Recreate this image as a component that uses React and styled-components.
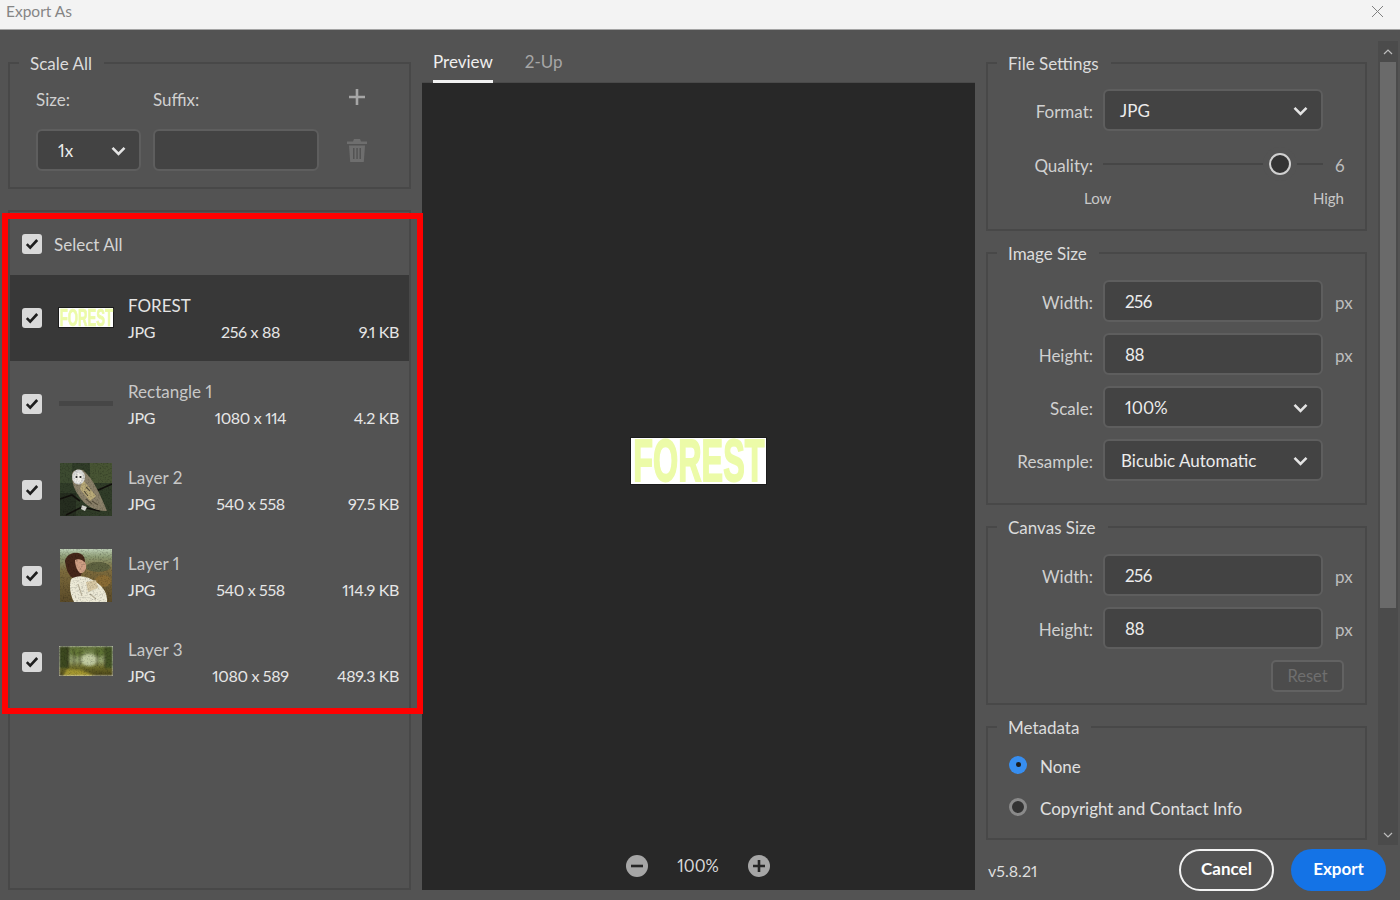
import React from 'react';
import styled, { createGlobalStyle } from 'styled-components';

const Global = createGlobalStyle`
  html, body { margin: 0; padding: 0; height: 100%; background: #535353; overflow: hidden; }
  body { font-family: Lato, "Noto Sans", sans-serif; font-size: 17px; color: #d4d4d4; font-variant-numeric: proportional-nums; font-feature-settings: "pnum" 1; }
  * { box-sizing: border-box; }
`;

const Dialog = styled.div`width: 1400px; height: 900px; display: flex; flex-direction: column; overflow: hidden;`;
const TitleBar = styled.header`
  height: 30px; flex: none; background: #f3f3f3; border-bottom: 1px solid #a4a4a4;
  display: flex; align-items: center; justify-content: space-between; padding: 0 16px 7px 6px;
  color: #858585; font-size: 15.5px;
`;
const Body = styled.main`flex: 1; display: grid; grid-template-columns: 422px 553px 425px; min-height: 0;`;

const LeftColumn = styled.section`position: relative; padding: 22px 11px 10px 8px; display: flex; flex-direction: column; gap: 21px;`;
const Group = styled.fieldset`
  margin: 0; min-width: 0; border: 2px solid #484848; padding: 0;
  height: ${p => p.$h}px; flex: none;
`;
const Legend = styled.legend`padding: 0 12px 0 11px; margin-left: 9px; line-height: 24px; height: 22px; color: #dcdcdc; font-size: 17px;`;
const ScaleGrid = styled.div`
  display: grid; grid-template-columns: 105px 166px 1fr; column-gap: 12px; grid-template-rows: 30px 42px; row-gap: 15px;
  padding: 10px 0 0 26px; align-items: center;
`;
const Label = styled.span`color: #d0d0d0;`;
const IconSlot = styled.span`display: flex; justify-content: center; width: 28px; margin-left: 12px; padding-bottom: ${p => p.$up || 0}px;`;
const Field = styled.div`
  height: 42px; background: #434343; border: 2px solid #5e5e5e; border-radius: 6px;
  display: flex; align-items: center; justify-content: space-between; color: #ececec;
  padding: 1px 13px 0 ${p => p.$pl || 18}px; font-size: 17px; letter-spacing: ${p => p.$num ? '-0.6px' : '0'};
`;
const Chevron = () => (
  <svg width="15" height="10" viewBox="0 0 15 10" fill="none" stroke="#e4e4e4" strokeWidth="2.6"><path d="M1.5 1.8 7.5 7.8 13.5 1.8" /></svg>
);

const LayerPanel = styled.div`flex: 1; border: 2px solid #484848; display: flex; flex-direction: column;`;
const SelectRow = styled.div`height: 63px; display: flex; align-items: center; padding-left: 12px; gap: 12px; flex: none;`;
const LayerRow = styled.div`
  height: 86px; flex: none; display: flex; align-items: center; padding: 0 10px 0 12px;
  background: ${p => p.$active ? '#383838' : 'transparent'};
`;
const Check = styled.span`
  width: 20px; height: 20px; flex: none; border-radius: 3px; background: #d9d9d9; display: flex; align-items: center; justify-content: center;
`;
const CheckMark = () => (
  <Check><svg width="14" height="12" viewBox="0 0 14 12" fill="none" stroke="#1e1e1e" strokeWidth="2.6"><path d="M1.8 6.2 5.2 9.6 12.2 2" /></svg></Check>
);
const SelectLabel = styled.span`color: #d4d4d4; padding-top: 2px;`;
const ThumbSlot = styled.div`width: 54px; height: 54px; flex: none; margin: 0 15px 2px 17px; display: flex; align-items: center; justify-content: center;`;
const LayerText = styled.div`flex: 1; min-width: 0; padding-top: 2px;`;
const LayerName = styled.div`height: 26px; line-height: 26px; color: ${p => p.$active ? '#e4e4e4' : '#c8c8c8'};`;
const LayerMeta = styled.div`
  height: 26px; line-height: 26px; display: grid; grid-template-columns: 60px 125px 1fr; color: #e6e6e6; font-size: 16px; letter-spacing: -0.35px;
`;
const Dim = styled.span`text-align: center;`;
const Size = styled.span`text-align: right;`;

const ForestMark = styled.div`
  width: ${p => p.$w}px; height: ${p => p.$h}px; background: #fff; display: flex; align-items: center; justify-content: center;
  outline: 1px solid #1c1c1c;
`;
const ForestWord = styled.span`
  font-family: "Liberation Sans", sans-serif; font-weight: 700; font-size: ${p => p.$fs}px; line-height: 1; color: #ecfba8;
  -webkit-text-stroke: ${p => p.$stroke}px #ecfba8; transform: scale(1.01, 1.85); white-space: nowrap;
`;
const RectThumb = styled.div`width: 54px; height: 5px; background: #464646;`;

const Grain = ({ id, blur }) => (
  <filter id={id} colorInterpolationFilters="sRGB">
    <feGaussianBlur in="SourceGraphic" stdDeviation={blur} result="b" />
    <feTurbulence type="fractalNoise" baseFrequency="0.6" numOctaves="2" seed="4" result="t" />
    <feColorMatrix in="t" type="matrix" values="0.6 0 0 0 0.68  0.6 0 0 0 0.68  0.6 0 0 0 0.68  0 0 0 0 1" result="g" />
    <feBlend in="b" in2="g" mode="multiply" />
  </filter>
);

const OwlThumb = () => (
  <svg width="52" height="53" viewBox="0 0 52 53">
    <defs><Grain id="o" blur="0.5" /></defs>
    <g filter="url(#o)">
      <rect width="52" height="53" fill="#303c28" />
      <rect x="30" width="22" height="20" fill="#475433" />
      <rect y="0" width="12" height="20" fill="#3c4a30" />
      <rect y="30" width="16" height="23" fill="#252d1f" />
      <path d="M0 36 12 32 20 38M36 28 52 21M6 52 22 44 40 48" stroke="#12100c" strokeWidth="1.6" fill="none" />
      <path d="M12 12C12 6 22 5 25 9 32 15 40 30 47 48 36 48 27 44 21 36 15 28 12 22 12 12Z" fill="#8a8069" />
      <path d="M23 17 36 33 30 38 20 26Z" fill="#b9aa78" />
      <path d="M26 24 30 28M24 28 28 33M32 38 38 42M26 36 32 41" stroke="#5a523f" strokeWidth="1.1" />
      <ellipse cx="18.5" cy="14" rx="6.5" ry="7.5" fill="#d8d8d6" />
      <ellipse cx="18.5" cy="15" rx="4.2" ry="5" fill="#efede7" />
      <circle cx="16.5" cy="14" r="1.1" fill="#222" /><circle cx="20.5" cy="14" r="1.1" fill="#222" />
      <path d="M22 42 27 44 25 48 21 46Z" fill="#d2d2cc" />
    </g>
  </svg>
);
const WomanThumb = () => (
  <svg width="52" height="53" viewBox="0 0 52 53">
    <defs>
      <Grain id="w" blur="0.6" />
      <linearGradient id="wb" x1="0" y1="0" x2="0" y2="1"><stop offset="0" stopColor="#c0d2b8" /><stop offset=".15" stopColor="#8c9a72" /><stop offset=".42" stopColor="#7c6a3c" /><stop offset="1" stopColor="#5a4a28" /></linearGradient>
    </defs>
    <g filter="url(#w)">
      <rect width="52" height="53" fill="url(#wb)" />
      <ellipse cx="38" cy="18" rx="12" ry="5" fill="#5e6240" />
      <ellipse cx="43" cy="32" rx="8" ry="6" fill="#8a6c34" />
      <path d="M5 12C7 3 20 1 24 8 27 15 23 22 20 28 14 32 7 28 5 12Z" fill="#452619" />
      <path d="M15 11C19 9 26 12 26 16 27 21 23 25 20 24 17 22 15 16 15 11Z" fill="#cf9f84" />
      <path d="M11 30C18 25 28 27 36 33 44 38 48 46 47 53H14C10 46 9 36 11 30Z" fill="#ece9d6" />
      <path d="M26 33 36 31 38 39 28 43Z" fill="#d6c7a3" />
      <path d="M18 35 22 47M30 45 36 50" stroke="#b7b09a" strokeWidth="1.2" />
    </g>
  </svg>
);
const WoodThumb = () => (
  <svg width="54" height="30" viewBox="0 0 54 30">
    <defs>
      <Grain id="f" blur="0.8" />
      <linearGradient id="fg" x1="0" y1="0" x2="0" y2="1"><stop offset="0" stopColor="#5b6c33" /><stop offset=".5" stopColor="#9aa874" /><stop offset=".72" stopColor="#6c6a28" /><stop offset="1" stopColor="#4a4318" /></linearGradient>
    </defs>
    <g filter="url(#f)">
      <rect width="54" height="30" fill="url(#fg)" />
      <ellipse cx="30" cy="14" rx="8" ry="6" fill="#c2cca2" />
      <rect x="0" y="0" width="10" height="22" fill="#3c481f" />
      <rect x="46" y="0" width="8" height="22" fill="#445525" />
      <ellipse cx="18" cy="6" rx="7" ry="4" fill="#667a38" />
      <ellipse cx="41" cy="6" rx="6" ry="4" fill="#5e7234" />
      <path d="M8 23 22 24 36 30H4Z" fill="#a39630" />
      <path d="M9 0V22M15 3V20M21 4V19M38 3V20M46 0V22" stroke="#2c2a18" strokeWidth="0.8" />
    </g>
  </svg>
);

const layers = [
  { name: 'FOREST', dim: '256 x 88', size: '9.1 KB', active: true, thumb: <ForestMark $w={54} $h={19}><ForestWord $fs={13} $stroke={0.4}>FOREST</ForestWord></ForestMark> },
  { name: 'Rectangle 1', dim: '1080 x 114', size: '4.2 KB', thumb: <RectThumb /> },
  { name: 'Layer 2', dim: '540 x 558', size: '97.5 KB', thumb: <OwlThumb /> },
  { name: 'Layer 1', dim: '540 x 558', size: '114.9 KB', thumb: <WomanThumb /> },
  { name: 'Layer 3', dim: '1080 x 589', size: '489.3 KB', thumb: <WoodThumb /> },
];

const Highlight = styled.div`position: absolute; left: 2px; top: 183px; width: 421px; height: 501px; border: 6px solid #ff0000; z-index: 5; pointer-events: none;`;

const CenterColumn = styled.section`display: flex; flex-direction: column; padding-bottom: 10px;`;
const Tabs = styled.nav`height: 53px; flex: none; display: flex; align-items: flex-end; padding-left: 11px; gap: 32px; border-bottom: 1px solid #4a4a4a;`;
const Tab = styled.span`
  height: 31px; line-height: 20px; color: ${p => p.$on ? '#efefef' : '#a6a6a6'};
  border-bottom: ${p => p.$on ? '3px solid #f2f2f2' : '3px solid transparent'}; margin-bottom: -1px;
`;
const Canvas = styled.div`flex: 1; background: #282828; display: flex; flex-direction: column;`;
const Stage = styled.div`flex: 1; display: flex; align-items: center; justify-content: center;`;
const ZoomBar = styled.div`height: 52px; flex: none; display: flex; align-items: center; justify-content: center; gap: 29px; padding: 4px 1px 0 0; color: #d8d8d8; font-size: 16.5px;`;
const ZoomIcon = ({ plus }) => (
  <svg width="22" height="22" viewBox="0 0 22 22">
    <circle cx="11" cy="11" r="11" fill="#a6a6a6" />
    <path d={plus ? 'M5 11H17M11 5V17' : 'M5 11H17'} stroke="#262626" strokeWidth="2.6" />
  </svg>
);

const RightColumn = styled.section`display: flex; flex-direction: column; min-height: 0;`;
const ScrollArea = styled.div`height: 804px; margin-top: 11px; flex: none; display: flex; padding-left: 11px; overflow: hidden;`;
const Panels = styled.div`width: 381px; flex: none; padding-top: 11px; display: flex; flex-direction: column; gap: 11px;`;
const ScrollBar = styled.div`
  width: 20px; margin-left: 11px; flex: none; background: #4b4b4b; display: flex; flex-direction: column; align-items: center; justify-content: space-between;
`;
const ScrollArrow = styled.div`height: 21px; display: flex; align-items: center; justify-content: center; flex: none;`;
const ScrollThumb = styled.div`width: 16px; height: 546px; background: #6a6a6a; flex: none;`;
const ScrollRest = styled.div`flex: 1;`;
const FormRows = styled.div`display: flex; flex-direction: column; gap: 11px; padding-top: ${p => p.$top || 0}px;`;
const FormRow = styled.div`
  display: grid; grid-template-columns: 105px 220px auto; column-gap: 10px; align-items: center; margin-top: ${p => p.$mt || 0}px;
`;
const RowLabel = styled.span`text-align: right; color: #d0d0d0; font-size: 17px; padding-top: 2px;`;
const Unit = styled.span`color: #bdbdbd; padding: 3px 0 0 2px;`;
const SliderTrack = styled.div`position: relative; height: 2px; background: #464646;`;
const SliderKnob = styled.span`
  position: absolute; left: 166px; top: -10px; width: 22px; height: 22px; border-radius: 50%; background: #333; border: 2.5px solid #d0d0d0;
  box-shadow: 0 0 0 6px #535353;
`;
const ScaleEnds = styled.div`display: flex; justify-content: space-between; padding: 0 21px 0 96px; font-size: 15px; color: #c8c8c8; margin-top: 13px;`;
const ResetRow = styled.div`display: flex; justify-content: flex-end; padding-right: 21px; margin-top: 11px;`;
const ResetButton = styled.div`
  width: 73px; height: 32px; border: 2px solid #626262; border-radius: 5px; background: #4c4c4c; color: #6f6f6f;
  display: flex; align-items: center; justify-content: center; font-size: 16.5px;
`;
const RadioList = styled.div`padding-top: 7px;`;
const RadioRow = styled.div`display: flex; align-items: center; gap: 13px; padding-left: 21px; height: 42px; color: #e0e0e0;`;
const Radio = styled.span`
  width: 18px; height: 18px; border-radius: 50%; flex: none; margin-top: -3px;
  background: ${p => p.$on ? '#378ef0' : '#333'}; border: ${p => p.$on ? 'none' : '3px solid #8a8a8a'};
  display: flex; align-items: center; justify-content: center;
`;
const RadioDot = styled.span`width: 5px; height: 5px; border-radius: 50%; background: #1c1c1c;`;
const Footer = styled.footer`flex: 1; display: flex; align-items: flex-start; padding: 4px 14px 0 13px; gap: 17px;`;
const Version = styled.span`flex: 1; color: #dedede; font-size: 16px; padding-top: 12px;`;
const Pill = styled.button`
  width: 95px; height: 42px; border-radius: 21px; font: 700 17px Lato, sans-serif; padding: 0 0 3px; color: #fff;
  background: ${p => p.$primary ? '#1473e6' : 'transparent'}; border: ${p => p.$primary ? 'none' : '2.5px solid #f2f2f2'};
`;

const UpChevron = ({ down }) => (
  <svg width="10" height="6" viewBox="0 0 10 6" fill="none" stroke="#bdbdbd" strokeWidth="1.2"><path d={down ? 'M1 1 5 5 9 1' : 'M1 5 5 1 9 5'} /></svg>
);

export default function App() {
  return (
    <Dialog>
      <Global />
      <TitleBar>
        <span>Export As</span>
        <svg width="13" height="13" viewBox="0 0 13 13" fill="none" stroke="#808080" strokeWidth="1"><path d="M1 1 12 12M12 1 1 12" /></svg>
      </TitleBar>
      <Body>
        <LeftColumn>
          <Group $h={137}>
            <Legend>Scale All</Legend>
            <ScaleGrid>
              <Label>Size:</Label>
              <Label>Suffix:</Label>
              <IconSlot $up={4}>
                <svg width="18" height="18" viewBox="0 0 18 18" fill="none" stroke="#a6a6a6" strokeWidth="2.6"><path d="M1 9H17M9 1V17" /></svg>
              </IconSlot>
              <Field $pl={20}>1x<Chevron /></Field>
              <Field />
              <IconSlot>
                <svg width="20" height="23" viewBox="0 0 20 23" fill="#6e6e6e"><path d="M7 0H13L14 2.5H20V5H0V2.5H6ZM2 6.5H18L16.8 23H3.2ZM6 9V20H7.5V9ZM9.3 9V20H10.8V9ZM12.5 9V20H14V9Z" fillRule="evenodd" /></svg>
              </IconSlot>
            </ScaleGrid>
          </Group>
          <LayerPanel>
            <SelectRow><CheckMark /><SelectLabel>Select All</SelectLabel></SelectRow>
            {layers.map(l => (
              <LayerRow key={l.name} $active={l.active}>
                <CheckMark />
                <ThumbSlot>{l.thumb}</ThumbSlot>
                <LayerText>
                  <LayerName $active={l.active}>{l.name}</LayerName>
                  <LayerMeta><span>JPG</span><Dim>{l.dim}</Dim><Size>{l.size}</Size></LayerMeta>
                </LayerText>
              </LayerRow>
            ))}
          </LayerPanel>
          <Highlight />
        </LeftColumn>

        <CenterColumn>
          <Tabs><Tab $on>Preview</Tab><Tab>2-Up</Tab></Tabs>
          <Canvas>
            <Stage><ForestMark $w={135} $h={46}><ForestWord $fs={32} $stroke={1}>FOREST</ForestWord></ForestMark></Stage>
            <ZoomBar><ZoomIcon /><span>100%</span><ZoomIcon plus /></ZoomBar>
          </Canvas>
        </CenterColumn>

        <RightColumn>
          <ScrollArea>
            <Panels>
              <Group $h={179}>
                <Legend>File Settings</Legend>
                <FormRows $top={15}>
                  <FormRow><RowLabel>Format:</RowLabel><Field $pl={15}>JPG<Chevron /></Field></FormRow>
                </FormRows>
                <FormRow $mt={21}><RowLabel>Quality:</RowLabel><SliderTrack><SliderKnob /></SliderTrack><Unit>6</Unit></FormRow>
                <ScaleEnds><span>Low</span><span>High</span></ScaleEnds>
              </Group>
              <Group $h={263}>
                <Legend>Image Size</Legend>
                <FormRows $top={16}>
                  <FormRow><RowLabel>Width:</RowLabel><Field $pl={20} $num>256</Field><Unit>px</Unit></FormRow>
                  <FormRow><RowLabel>Height:</RowLabel><Field $pl={20} $num>88</Field><Unit>px</Unit></FormRow>
                  <FormRow><RowLabel>Scale:</RowLabel><Field $pl={20}>100%<Chevron /></Field></FormRow>
                  <FormRow><RowLabel>Resample:</RowLabel><Field $pl={16}>Bicubic Automatic<Chevron /></Field></FormRow>
                </FormRows>
              </Group>
              <Group $h={189}>
                <Legend>Canvas Size</Legend>
                <FormRows $top={16}>
                  <FormRow><RowLabel>Width:</RowLabel><Field $pl={20} $num>256</Field><Unit>px</Unit></FormRow>
                  <FormRow><RowLabel>Height:</RowLabel><Field $pl={20} $num>88</Field><Unit>px</Unit></FormRow>
                </FormRows>
                <ResetRow><ResetButton>Reset</ResetButton></ResetRow>
              </Group>
              <Group $h={124}>
                <Legend>Metadata</Legend>
                <RadioList>
                  <RadioRow><Radio $on><RadioDot /></Radio>None</RadioRow>
                  <RadioRow><Radio />Copyright and Contact Info</RadioRow>
                </RadioList>
              </Group>
            </Panels>
            <ScrollBar>
              <ScrollArrow><UpChevron /></ScrollArrow>
              <ScrollThumb />
              <ScrollRest />
              <ScrollArrow><UpChevron down /></ScrollArrow>
            </ScrollBar>
          </ScrollArea>
          <Footer>
            <Version>v5.8.21</Version>
            <Pill>Cancel</Pill>
            <Pill $primary>Export</Pill>
          </Footer>
        </RightColumn>
      </Body>
    </Dialog>
  );
}
